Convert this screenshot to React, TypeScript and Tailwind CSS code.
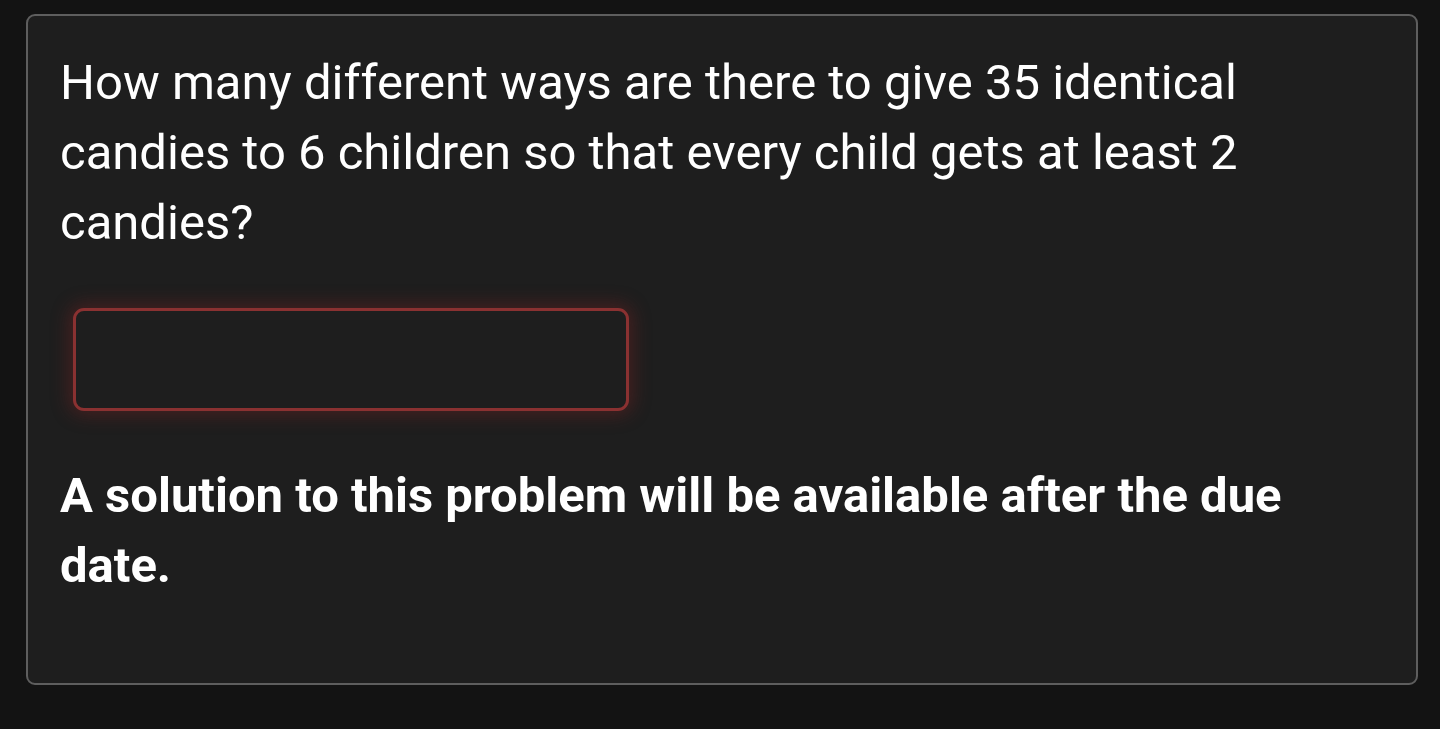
export default function App() {
  return (
    <div
      className="min-h-[729px] w-full bg-[#131313] pt-[14px] pl-[26px] pr-[22px]"
      style={{ fontFamily: "Roboto, 'Noto Sans', sans-serif" }}
    >
      <div className="h-[671px] rounded-[9px] border-2 border-[#5e5e5e] bg-[#1e1e1e] px-[32px] pt-[32px]">
        {/* Question */}
        <p className="text-[49px] leading-[70px] text-white">
          How many different ways are there to give 35 identical candies to 6 children so that every child gets at
          least 2 candies?
        </p>

        {/* Answer input */}
        <div className="mt-[50px] ml-[13px]">
          <input
            type="text"
            className="h-[103px] w-[556px] rounded-[11px] border-[3px] border-[#8a3131] bg-[#1e1e1e] px-4 text-[40px] text-white shadow-[0_0_18px_4px_rgba(130,35,35,0.4)] outline-none"
          />
        </div>

        {/* Solution note */}
        <p className="mt-[50px] text-[49px] font-bold leading-[70px] text-white">
          A solution to this problem will be available after the due date.
        </p>
      </div>
    </div>
  );
}
